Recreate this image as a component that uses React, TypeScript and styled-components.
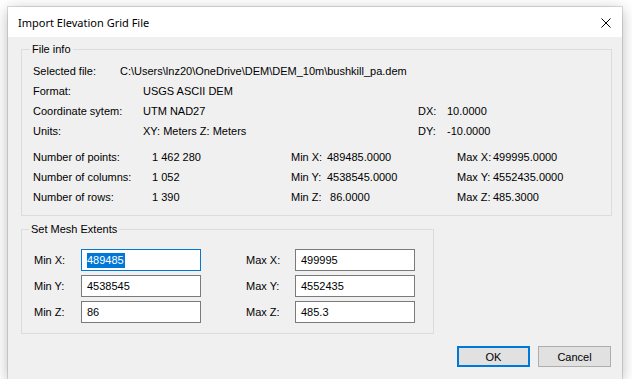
import React from "react";
import styled, { createGlobalStyle } from "styled-components";

const GlobalStyle = createGlobalStyle`
  html, body {
    margin: 0;
    padding: 0;
    background: #ffffff;
  }
  body {
    font-family: "Liberation Sans", Arial, sans-serif;
    font-size: 11px;
    color: #000;
  }
`;

const Page = styled.div`
  padding: 7px 0 0 8px;
`;

const Window = styled.div`
  width: 614px;
  height: 372px;
  background: #f0f0f0;
  box-shadow: 0 0 0 1px rgba(0, 0, 0, 0.12), 0 3px 14px rgba(0, 0, 0, 0.28);
  display: flex;
  flex-direction: column;
`;

const TitleBar = styled.div`
  height: 30px;
  flex-shrink: 0;
  background: #ffffff;
  display: flex;
  align-items: center;
  justify-content: space-between;
  padding: 0 11px 0 10px;
`;

const Title = styled.span`
  font-family: "Noto Sans", "Open Sans", sans-serif;
  font-size: 11px;
  color: #000;
`;

const CloseButton = styled.div`
  width: 10px;
  height: 10px;
  display: flex;
  margin-top: 1px;
`;

const Body = styled.div`
  flex: 1;
  min-height: 0;
  display: flex;
  flex-direction: column;
  padding: 6px 10px 0 13px;
`;

const Group = styled.fieldset<{ $width?: number; $pad: string }>`
  margin: 0;
  border: 1px solid #dcdcdc;
  padding: ${(p) => p.$pad};
  width: ${(p) => (p.$width ? `${p.$width}px` : "auto")};
  box-sizing: border-box;
  min-width: 0;
  flex-shrink: 0;
`;

const Caption = styled.legend<{ $shift: number }>`
  padding: 0 2px;
  margin-left: ${(p) => p.$shift}px;
  line-height: 13px;
  font-size: 11px;
`;

const Rows = styled.div<{ $cols: string; $gapTop?: number }>`
  display: grid;
  grid-template-columns: ${(p) => p.$cols};
  grid-auto-rows: 20px;
  align-items: center;
  margin-top: ${(p) => p.$gapTop ?? 0}px;
  white-space: pre;
`;

const MeshGrid = styled.div`
  display: grid;
  grid-template-columns: 47px 120px 45px 49px 120px;
  grid-auto-rows: 22px;
  row-gap: 4px;
  align-items: center;
`;

const FieldLabel = styled.span``;

const TextBox = styled.div<{ $focused?: boolean }>`
  height: 22px;
  box-sizing: border-box;
  background: #ffffff;
  border: 1px solid ${(p) => (p.$focused ? "#0078d7" : "#7a7a7a")};
  display: flex;
  align-items: center;
  padding-left: 5px;
`;

const Selected = styled.span`
  background: #0078d7;
  color: #ffffff;
  line-height: 15px;
  padding-right: 1px;
`;

const Spacer = styled.div<{ $h: number }>`
  height: ${(p) => p.$h}px;
  flex-shrink: 0;
`;

const Footer = styled.div`
  margin-top: 12px;
  display: flex;
  justify-content: flex-end;
  gap: 8px;
  padding-right: 1px;
`;

const Button = styled.button<{ $default?: boolean }>`
  width: 73px;
  height: 21px;
  box-sizing: border-box;
  background: #e1e1e1;
  border: ${(p) => (p.$default ? "2px solid #0078d7" : "1px solid #adadad")};
  font-family: "Liberation Sans", Arial, sans-serif;
  font-size: 11px;
  color: #000;
  padding: 0;
`;

const stats = [
  ["Number of points:", "1 462 280", "Min X:", "489485.0000", "Max X:", "499995.0000"],
  ["Number of columns:", "1 052", "Min Y:", "4538545.0000", "Max Y:", "4552435.0000"],
  ["Number of rows:", "1 390", "Min Z:", " 86.0000", "Max Z:", "485.3000"],
];

const mesh = [
  ["Min X:", "489485", "Max X:", "499995"],
  ["Min Y:", "4538545", "Max Y:", "4552435"],
  ["Min Z:", "86", "Max Z:", "485.3"],
];

export default function App() {
  return (
    <>
      <GlobalStyle />
      <Page>
        <Window>
          <TitleBar>
            <Title>Import Elevation Grid File</Title>
            <CloseButton>
              <svg width="10" height="10" viewBox="0 0 10 10">
                <path d="M0.5 0.5 L9.5 9.5 M9.5 0.5 L0.5 9.5" stroke="#000" strokeWidth="1" />
              </svg>
            </CloseButton>
          </TitleBar>
          <Body>
            <Group $pad="5px 11px 8px 11px">
              <Caption $shift={-3}>File info</Caption>
              <Rows $cols="87px 1fr">
                <span>Selected file:</span>
                <span>C:\Users\lnz20\OneDrive\DEM\DEM_10m\bushkill_pa.dem</span>
              </Rows>
              <Rows $cols="110px 275px 29px 1fr">
                <span>Format:</span>
                <span>USGS ASCII DEM</span>
                <span />
                <span />
                <span>Coordinate sytem:</span>
                <span>UTM NAD27</span>
                <span>DX:</span>
                <span>10.0000</span>
                <span>Units:</span>
                <span>XY: Meters Z: Meters</span>
                <span>DY:</span>
                <span>-10.0000</span>
              </Rows>
              <Rows $cols="119px 139px 36px 130px 36px 1fr" $gapTop={6}>
                {stats.flat().map((t, i) => (
                  <span key={i}>{t}</span>
                ))}
              </Rows>
            </Group>
            <Spacer $h={7} />
            <Group $width={413} $pad="13px 0 10px 12px">
              <Caption $shift={-5}>Set Mesh Extents</Caption>
              <MeshGrid>
                {mesh.map((row, r) => (
                  <React.Fragment key={r}>
                    <FieldLabel>{row[0]}</FieldLabel>
                    <TextBox $focused={r === 0}>
                      {r === 0 ? <Selected>{row[1]}</Selected> : row[1]}
                    </TextBox>
                    <span />
                    <FieldLabel>{row[2]}</FieldLabel>
                    <TextBox>{row[3]}</TextBox>
                  </React.Fragment>
                ))}
              </MeshGrid>
            </Group>
            <Footer>
              <Button $default>OK</Button>
              <Button>Cancel</Button>
            </Footer>
          </Body>
        </Window>
      </Page>
    </>
  );
}
